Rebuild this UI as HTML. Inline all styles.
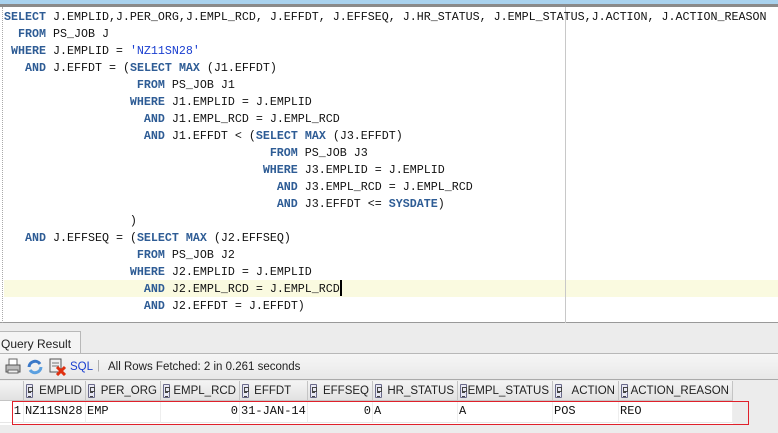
<!DOCTYPE html>
<html><head><style>
*{margin:0;padding:0;box-sizing:border-box}
body{width:778px;height:433px;overflow:hidden;background:#ececec;font-family:"Liberation Sans",sans-serif;position:relative}
#top{position:absolute;left:0;top:0;width:778px;height:4px;background:#a9d2ee}
#top2{position:absolute;left:0;top:4px;width:778px;height:3px;background:#8a8a8a}
#ed{position:absolute;left:0;top:7px;width:778px;height:316px;background:#fff;border-bottom:1px solid #999}
#dot{position:absolute;left:2px;top:7px;height:316px;border-left:1px dotted #aaa}
#margin{position:absolute;left:565px;top:7px;width:1px;height:316px;background:#c8c8c8}
#hl{position:absolute;left:4px;top:280px;width:774px;height:17px;background:#fafae0}
pre{position:absolute;left:4px;top:9px;font-family:"Liberation Mono",monospace;font-size:11.67px;line-height:17px;color:#111}
b{color:#2e5c95}
s{text-decoration:none;color:#1a3fd0}
#caret{position:absolute;left:340px;top:280px;width:2px;height:16px;background:#000}
#tab{position:absolute;left:-2px;top:331px;width:83px;height:22px;background:#f4f4f4;border:1px solid #b8b8b8;border-bottom:none;font-size:12px;padding:5px 0 0 2px;color:#222}
#tb{position:absolute;left:0;top:353px;width:778px;height:27px;background:linear-gradient(#f6f6f6,#e8e8e8);border-top:1px solid #b8b8b8;border-bottom:1px solid #aaa;font-size:11.5px;color:#222}
.hd{position:absolute;top:381px;height:20px;background:linear-gradient(#f4f4f4,#e2e2e2);border-right:1px solid #c4c4c4;border-bottom:1px solid #c4c4c4;font-size:11.5px;color:#222;line-height:20px;text-align:right;padding-right:3px;white-space:nowrap}
.az{position:absolute;left:2px;top:3px;width:7px;height:14px;border:1px solid #6a6a8a;background:#e8e8f4;border-radius:1px}
.az::before{content:"";position:absolute;left:1px;top:2px;width:3px;height:3px;border:1px solid #444}
.az::after{content:"";position:absolute;left:1px;top:7px;width:3px;height:3px;border-top:1px solid #444;border-bottom:1px solid #444}
.c{position:absolute;top:401px;height:22px;background:#fff;border-right:1px solid #eee;border-bottom:1px solid #e6e6e6;font-family:"Liberation Mono",monospace;font-size:12px;line-height:20px;color:#111;padding:0 1px}
#red{position:absolute;left:12px;top:401px;width:737px;height:24px;border:1px solid #e0202a}
</style></head><body>
<div id="top"></div><div id="top2"></div>
<div id="ed"></div>
<div id="hl"></div>
<div id="dot"></div>
<div id="margin"></div>
<pre><b>SELECT</b> J.EMPLID,J.PER_ORG,J.EMPL_RCD, J.EFFDT, J.EFFSEQ, J.HR_STATUS, J.EMPL_STATUS,J.ACTION, J.ACTION_REASON
  <b>FROM</b> PS_JOB J
 <b>WHERE</b> J.EMPLID = <s>'NZ11SN28'</s>
   <b>AND</b> J.EFFDT = (<b>SELECT</b> <b>MAX</b> (J1.EFFDT)
                   <b>FROM</b> PS_JOB J1
                  <b>WHERE</b> J1.EMPLID = J.EMPLID
                    <b>AND</b> J1.EMPL_RCD = J.EMPL_RCD
                    <b>AND</b> J1.EFFDT &lt; (<b>SELECT</b> <b>MAX</b> (J3.EFFDT)
                                      <b>FROM</b> PS_JOB J3
                                     <b>WHERE</b> J3.EMPLID = J.EMPLID
                                       <b>AND</b> J3.EMPL_RCD = J.EMPL_RCD
                                       <b>AND</b> J3.EFFDT &lt;= <b>SYSDATE</b>)
                  )
   <b>AND</b> J.EFFSEQ = (<b>SELECT</b> <b>MAX</b> (J2.EFFSEQ)
                   <b>FROM</b> PS_JOB J2
                  <b>WHERE</b> J2.EMPLID = J.EMPLID
                    <b>AND</b> J2.EMPL_RCD = J.EMPL_RCD
                    <b>AND</b> J2.EFFDT = J.EFFDT)</pre>
<div id="caret"></div>
<div id="tab">Query Result <span style="font-size:9px;color:#555">&nbsp;×</span></div>
<div id="tb">
<svg style="position:absolute;left:5px;top:4px" width="16" height="17"><rect x="4" y="1" width="8" height="6" fill="#fff" stroke="#666"/><rect x="1" y="7" width="14" height="7" fill="#bbb" stroke="#555"/><rect x="3" y="12" width="10" height="3" fill="#eee" stroke="#666"/></svg>
<svg style="position:absolute;left:26px;top:4px" width="18" height="18"><path d="M3 9a6 6 0 0 1 11-3" fill="none" stroke="#3a78c8" stroke-width="3"/><path d="M15 9a6 6 0 0 1-11 3" fill="none" stroke="#5ba0e0" stroke-width="3"/></svg>
<svg style="position:absolute;left:49px;top:4px" width="18" height="18"><rect x="1" y="1" width="11" height="13" fill="#eee" stroke="#555"/><line x1="3" y1="5" x2="10" y2="5" stroke="#777"/><line x1="3" y1="8" x2="10" y2="8" stroke="#777"/><path d="M8 9l8 8M16 9l-8 8" stroke="#e03010" stroke-width="3"/></svg>
<span style="position:absolute;left:70px;top:7px;color:#1a3fd0">SQL</span>
<span style="position:absolute;left:97px;top:6px;color:#aaa">|</span>
<span style="position:absolute;left:108px;top:7px">All Rows Fetched: 2 in 0.261 seconds</span>
</div>
<div style="position:absolute;left:0;top:381px;width:733px;height:44px;background:#fff"></div>
<div class="hd" style="left:0;width:24px"></div>
<div class="hd" style="left:24px;width:62px"><span class="az"></span>EMPLID</div>
<div class="hd" style="left:86px;width:75px"><span class="az"></span>PER_ORG</div>
<div class="hd" style="left:161px;width:79px"><span class="az"></span>EMPL_RCD</div>
<div class="hd" style="left:240px;width:68px"><span class="az"></span>EFFDT&nbsp;&nbsp;&nbsp;&nbsp;</div>
<div class="hd" style="left:308px;width:65px"><span class="az"></span>EFFSEQ</div>
<div class="hd" style="left:373px;width:85px"><span class="az"></span>HR_STATUS</div>
<div class="hd" style="left:458px;width:95px"><span class="az"></span>EMPL_STATUS</div>
<div class="hd" style="left:553px;width:66px"><span class="az"></span>ACTION</div>
<div class="hd" style="left:619px;width:114px"><span class="az"></span>ACTION_REASON</div>
<div class="c" style="left:0;width:24px;text-align:right;padding-right:2px">1</div>
<div class="c" style="left:24px;width:62px">NZ11SN28</div>
<div class="c" style="left:86px;width:75px">EMP</div>
<div class="c" style="left:161px;width:79px;text-align:right">0</div>
<div class="c" style="left:240px;width:68px">31-JAN-14</div>
<div class="c" style="left:308px;width:65px;text-align:right">0</div>
<div class="c" style="left:373px;width:85px">A</div>
<div class="c" style="left:458px;width:95px">A</div>
<div class="c" style="left:553px;width:66px">POS</div>
<div class="c" style="left:619px;width:114px">REO</div>
<div id="red"></div>
</body></html>
